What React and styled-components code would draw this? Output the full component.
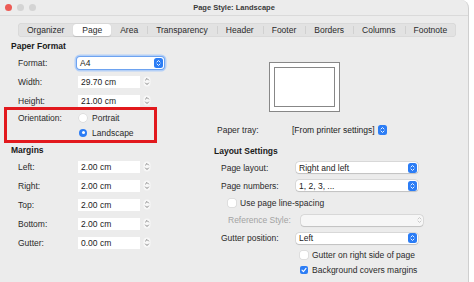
import React from "react";
import styled, { createGlobalStyle } from "styled-components";

const GlobalStyle = createGlobalStyle`
  html, body {
    margin: 0;
    padding: 0;
    background: #fff;
  }
  body {
    font-family: "Liberation Sans", Arial, sans-serif;
    font-size: 8.5px;
    color: #262626;
  }
`;

const Window = styled.div`
  width: 468px;
  height: 282px;
  background: #ececec;
  border-right: 1px solid #cfcfcf;
  border-top-right-radius: 8px;
  display: flex;
  flex-direction: column;
  overflow: hidden;
`;

const TitleBar = styled.div`
  height: 15px;
  display: grid;
  grid-template-columns: 1fr auto 1fr;
  align-items: center;
  border-bottom: 1px solid #dadada;
`;

const Lights = styled.div`
  display: flex;
  gap: 5px;
  padding-left: 5px;
`;

const Light = styled.span`
  width: 7px;
  height: 7px;
  border-radius: 50%;
  background: ${(p) => (p.$red ? "#ec5b55" : "#d4d4d4")};
`;

const Title = styled.div`
  font-size: 7.5px;
  font-weight: bold;
  color: #3a3a3a;
`;

const TabBar = styled.div`
  margin: 7px 0 0 18px;
  align-self: flex-start;
  height: 14px;
  display: flex;
  align-items: center;
  background: #e2e2e2;
  border-radius: 4px;
  box-shadow: inset 0 0 0 0.5px #d2d2d2;
`;

const Tab = styled.div`
  position: relative;
  padding: 0 9px;
  height: 12px;
  line-height: 12px;
  color: #2a2a2a;
  border-radius: 3px;
  background: ${(p) => (p.$active ? "#fff" : "transparent")};
  box-shadow: ${(p) => (p.$active ? "0 0.5px 1px rgba(0,0,0,0.15)" : "none")};

  &::before {
    content: "";
    display: ${(p) => (p.$sep ? "block" : "none")};
    position: absolute;
    left: 0;
    top: 2px;
    width: 1px;
    height: 8px;
    background: #d0d0d0;
  }
`;

const Body = styled.div`
  margin-top: 3px;
  display: grid;
  grid-template-columns: 205px 1fr;
`;

const Column = styled.div`
  display: flex;
  flex-direction: column;
`;

const SectionTitle = styled.div`
  height: 13px;
  line-height: 13px;
  font-weight: bold;
  color: #1a1a1a;
  padding-left: ${(p) => p.$indent}px;
  margin-top: ${(p) => p.$top || 0}px;
`;

const Row = styled.div`
  display: grid;
  grid-template-columns: ${(p) => p.$labelW}px auto;
  align-items: center;
  height: ${(p) => p.$h || 19}px;
  padding-left: ${(p) => p.$indent}px;
  margin-top: ${(p) => p.$top || 0}px;
  color: ${(p) => (p.$disabled ? "#a3a3a3" : "#2a2a2a")};
`;

const Group = styled.div`
  margin-left: 7px;
  width: 147px;
  outline: 3px solid #e2191d;

  & > ${Row} {
    padding-left: 11px;
  }
`;

const Control = styled.div`
  display: flex;
  align-items: center;
  gap: ${(p) => p.$gap || 3}px;
`;

const Field = styled.div`
  width: 62px;
  height: 12px;
  line-height: 12px;
  padding: 0 3px;
  box-sizing: border-box;
  background: #fff;
  color: #222;
`;

const SelectBox = styled.div`
  width: ${(p) => p.$w}px;
  height: ${(p) => p.$h || 11}px;
  box-sizing: border-box;
  display: flex;
  align-items: center;
  justify-content: space-between;
  padding: 0 1px 0 3px;
  border-radius: 3px;
  background: ${(p) => (p.$disabled ? "#f6f6f6" : "#fff")};
  color: #222;
  margin-left: ${(p) => p.$shift || 0}px;
  box-shadow: ${(p) =>
    p.$focus
      ? "0 0 0 1px #6ea3f0, 0 0 0 2.5px #b3cff7"
      : "0 0 0 0.5px rgba(0,0,0,0.14), 0 0.5px 1px rgba(0,0,0,0.12)"};
`;

const PopupText = styled.span`
  padding-left: 3px;
  color: #222;
`;

const BlueBtn = styled.span`
  width: 9px;
  height: 10px;
  border-radius: 2.5px;
  background: #2c7df5;
  display: flex;
  align-items: center;
  justify-content: center;
`;

const Radio = styled.span`
  width: 8px;
  height: 8px;
  margin-left: 1px;
  border-radius: 50%;
  box-sizing: border-box;
  display: flex;
  align-items: center;
  justify-content: center;
  background: ${(p) => (p.$on ? "#2c7df5" : "#fff")};
  box-shadow: ${(p) => (p.$on ? "none" : "0 0 0 0.5px #cfcfcf")};

  &::after {
    content: "";
    display: ${(p) => (p.$on ? "block" : "none")};
    width: 3px;
    height: 3px;
    border-radius: 50%;
    background: #fff;
  }
`;

const CheckRow = styled.div`
  display: flex;
  align-items: center;
  gap: 4px;
  height: ${(p) => p.$h}px;
  padding-left: ${(p) => p.$indent}px;
  color: #2a2a2a;
`;

const Box = styled.span`
  width: 8px;
  height: 8px;
  border-radius: 2px;
  display: flex;
  align-items: center;
  justify-content: center;
  background: ${(p) => (p.$on ? "#2c7df5" : "#fff")};
  box-shadow: ${(p) => (p.$on ? "none" : "0 0 0 0.5px #cfcfcf")};
`;

const Preview = styled.div`
  margin: 22px 0 0 64px;
  width: 71px;
  height: 50px;
  box-sizing: border-box;
  border: 1px solid #878787;
  background: #fff;
  padding: 4px;
  display: flex;
`;

const PreviewInner = styled.div`
  flex: 1;
  border: 1px solid #878787;
`;

const Chevrons = ({ color = "#fff", w = 5, h = 8 }) => (
  <svg width={w} height={h} viewBox="0 0 5 8" fill="none">
    <path d="M1 3L2.5 1.5L4 3" stroke={color} strokeWidth="0.9" strokeLinecap="round" strokeLinejoin="round" />
    <path d="M1 5L2.5 6.5L4 5" stroke={color} strokeWidth="0.9" strokeLinecap="round" strokeLinejoin="round" />
  </svg>
);

const Spinner = ({ color = "#7a7a7a" }) => (
  <svg width="8" height="11" viewBox="0 0 8 11" fill="none">
    <rect x="0.5" y="0.5" width="7" height="10" rx="3.5" fill="#f7f7f7" />
    <path d="M2.5 4L4 2.5L5.5 4" stroke={color} strokeWidth="0.9" strokeLinecap="round" strokeLinejoin="round" />
    <path d="M2.5 7L4 8.5L5.5 7" stroke={color} strokeWidth="0.9" strokeLinecap="round" strokeLinejoin="round" />
  </svg>
);

const Check = () => (
  <svg width="6" height="6" viewBox="0 0 6 6" fill="none">
    <path d="M1 3.2L2.4 4.6L5 1.4" stroke="#fff" strokeWidth="1.1" strokeLinecap="round" strokeLinejoin="round" />
  </svg>
);

const tabs = ["Organizer", "Page", "Area", "Transparency", "Header", "Footer", "Borders", "Columns", "Footnote"];

const NumField = ({ value }) => (
  <Control>
    <Field>{value}</Field>
    <Spinner />
  </Control>
);

const Select = ({ value, w = 122, focus, disabled, shift }) => (
  <SelectBox $w={w} $h={focus ? 12 : 11} $focus={focus} $disabled={disabled} $shift={shift}>
    <span>{value}</span>
    {disabled ? <Chevrons color="#c4c4c4" /> : (
      <BlueBtn>
        <Chevrons />
      </BlueBtn>
    )}
  </SelectBox>
);

const margins = [
  ["Left:", "2.00 cm"],
  ["Right:", "2.00 cm"],
  ["Top:", "2.00 cm"],
  ["Bottom:", "2.00 cm"],
  ["Gutter:", "0.00 cm"],
];

export default function App() {
  return (
    <>
      <GlobalStyle />
      <Window>
        <TitleBar>
          <Lights>
            <Light $red />
            <Light />
            <Light />
          </Lights>
          <Title>Page Style: Landscape</Title>
          <div />
        </TitleBar>

        <TabBar>
          {tabs.map((t, i) => (
            <Tab key={t} $active={t === "Page"} $sep={i > 2}>
              {t}
            </Tab>
          ))}
        </TabBar>

        <Body>
          <Column>
            <SectionTitle $indent={11}>Paper Format</SectionTitle>
            <Row $indent={18} $labelW={60}>
              <span>Format:</span>
              <Select value="A4" w={87} focus shift={-1} />
            </Row>
            <Row $indent={18} $labelW={60}>
              <span>Width:</span>
              <NumField value="29.70 cm" />
            </Row>
            <Row $indent={18} $labelW={60}>
              <span>Height:</span>
              <NumField value="21.00 cm" />
            </Row>
            <Group>
              <Row $labelW={60} $h={15}>
                <span>Orientation:</span>
                <Control $gap={5}>
                  <Radio />
                  <span>Portrait</span>
                </Control>
              </Row>
              <Row $labelW={60} $h={15}>
                <span />
                <Control $gap={5}>
                  <Radio $on />
                  <span>Landscape</span>
                </Control>
              </Row>
            </Group>

            <SectionTitle $indent={11} $top={4}>Margins</SectionTitle>
            {margins.map(([label, value]) => (
              <Row key={label} $indent={18} $labelW={60}>
                <span>{label}</span>
                <NumField value={value} />
              </Row>
            ))}
          </Column>

          <Column>
            <Preview>
              <PreviewInner />
            </Preview>
            <Row $indent={12} $labelW={72} $top={8}>
              <span>Paper tray:</span>
              <Control>
                <PopupText>[From printer settings]</PopupText>
                <BlueBtn>
                  <Chevrons />
                </BlueBtn>
              </Control>
            </Row>

            <SectionTitle $indent={9} $top={6}>Layout Settings</SectionTitle>
            <Row $indent={16} $labelW={75}>
              <span>Page layout:</span>
              <Select value="Right and left" />
            </Row>
            <Row $indent={16} $labelW={75} $h={17}>
              <span>Page numbers:</span>
              <Select value="1, 2, 3, ..." />
            </Row>
            <CheckRow $indent={23} $h={17}>
              <Box />
              <span>Use page line-spacing</span>
            </CheckRow>
            <Row $indent={23} $labelW={73} $h={18} $disabled>
              <span>Reference Style:</span>
              <Select value="" disabled />
            </Row>
            <Row $indent={16} $labelW={75} $h={18}>
              <span>Gutter position:</span>
              <Select value="Left" />
            </Row>
            <CheckRow $indent={95} $h={16}>
              <Box />
              <span>Gutter on right side of page</span>
            </CheckRow>
            <CheckRow $indent={95} $h={14}>
              <Box $on>
                <Check />
              </Box>
              <span>Background covers margins</span>
            </CheckRow>
          </Column>
        </Body>
      </Window>
    </>
  );
}
